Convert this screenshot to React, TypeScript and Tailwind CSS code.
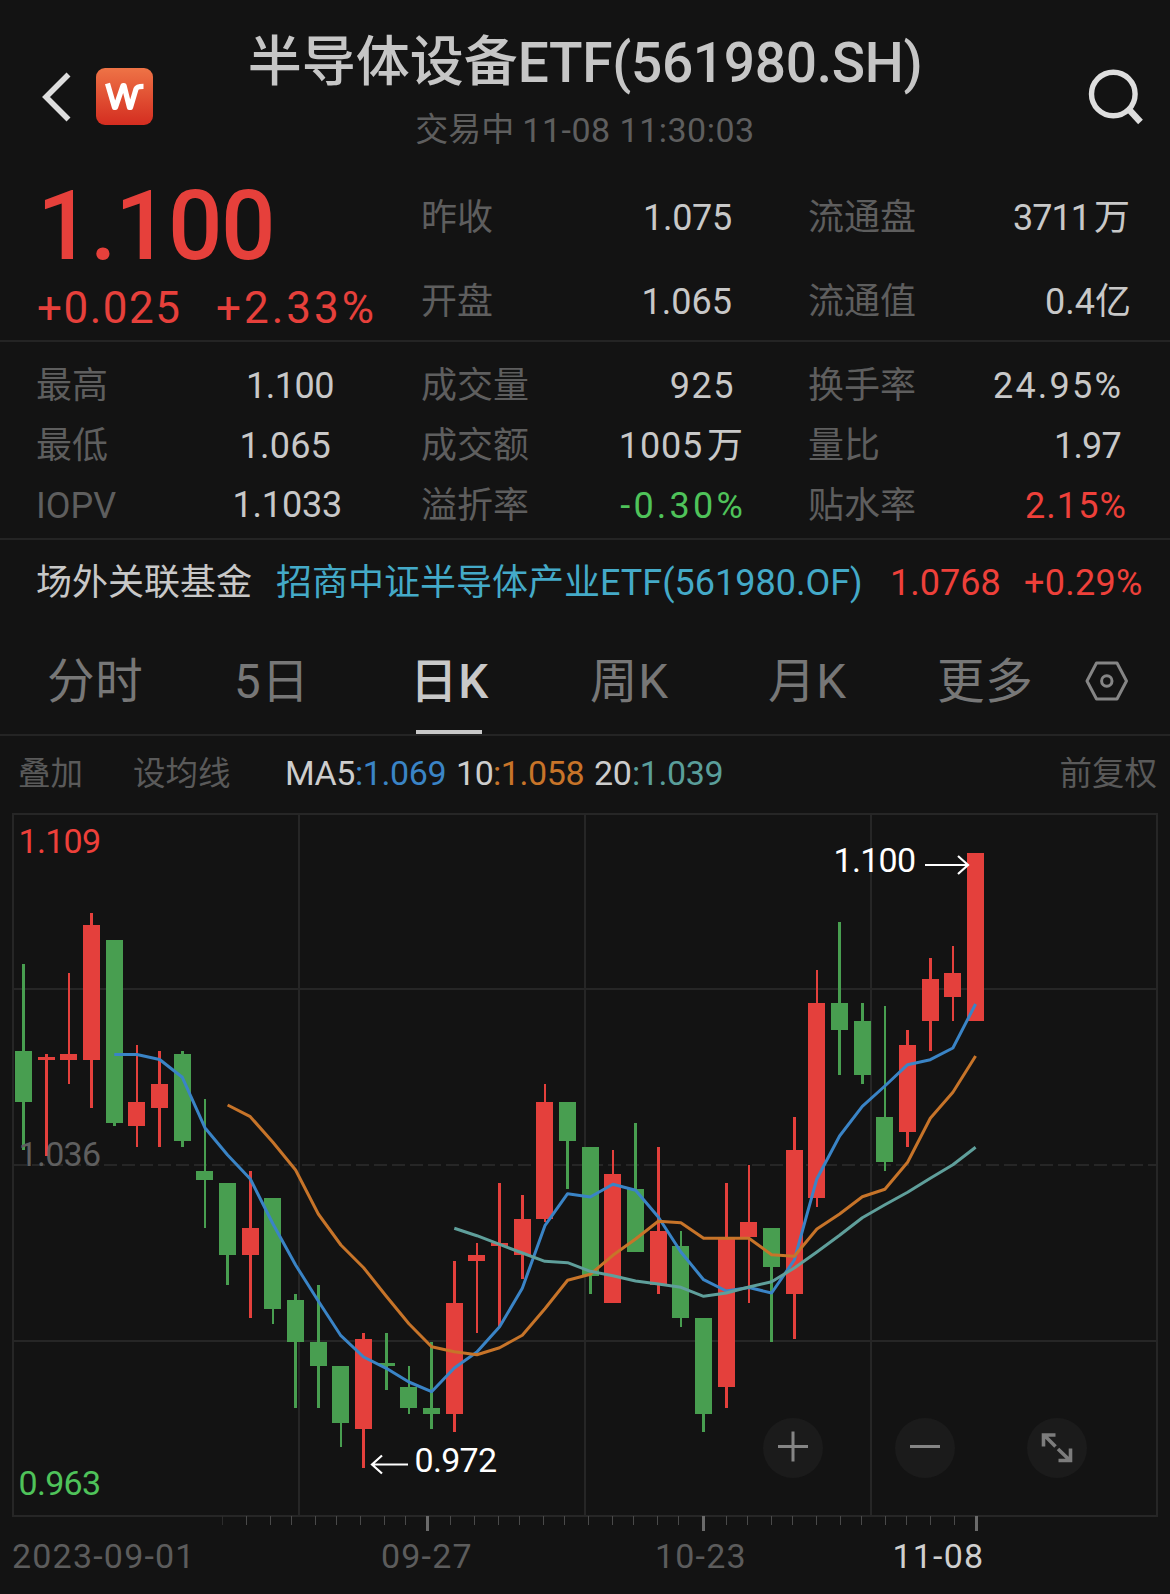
import clsx from "clsx";

type Stat = { label: string; value: string; unit?: string; className?: string };

// body and wick extents, in chart pixels
type Candle = { up: boolean; high: number; top: number; bottom: number; low: number };

const c = (dir: "u" | "d", high: number, top: number, bottom: number, low: number): Candle => ({
  up: dir === "u",
  high,
  top,
  bottom,
  low,
});

const CANDLES: Candle[] = [
  c("d", 964, 1051, 1102, 1150),
  c("u", 1054, 1057, 1060, 1156),
  c("u", 973, 1054, 1060, 1084),
  c("u", 913, 925, 1060, 1108),
  c("d", 940, 940, 1123, 1126),
  c("u", 1045, 1102, 1126, 1147),
  c("u", 1051, 1084, 1108, 1147),
  c("d", 1051, 1054, 1141, 1147),
  c("d", 1099, 1171, 1180, 1228),
  c("d", 1183, 1183, 1255, 1285),
  c("u", 1171, 1228, 1255, 1318),
  c("d", 1198, 1198, 1309, 1324),
  c("d", 1294, 1300, 1342, 1408),
  c("d", 1285, 1342, 1366, 1408),
  c("d", 1366, 1366, 1423, 1447),
  c("u", 1333, 1339, 1429, 1468),
  c("d", 1333, 1363, 1366, 1390),
  c("d", 1366, 1387, 1408, 1414),
  c("d", 1342, 1408, 1414, 1429),
  c("u", 1261, 1303, 1414, 1432),
  c("u", 1243, 1255, 1261, 1333),
  c("u", 1183, 1243, 1246, 1327),
  c("u", 1195, 1219, 1255, 1279),
  c("u", 1084, 1102, 1219, 1222),
  c("d", 1102, 1102, 1141, 1189),
  c("d", 1147, 1147, 1276, 1294),
  c("u", 1150, 1174, 1303, 1303),
  c("d", 1123, 1189, 1252, 1252),
  c("u", 1147, 1231, 1285, 1294),
  c("d", 1231, 1246, 1318, 1327),
  c("d", 1318, 1318, 1414, 1432),
  c("u", 1183, 1239, 1387, 1408),
  c("u", 1165, 1222, 1237, 1303),
  c("d", 1228, 1228, 1267, 1342),
  c("u", 1117, 1150, 1294, 1339),
  c("u", 970, 1003, 1198, 1207),
  c("d", 922, 1003, 1030, 1075),
  c("d", 1003, 1021, 1075, 1084),
  c("d", 1006, 1117, 1162, 1171),
  c("u", 1030, 1045, 1132, 1147),
  c("u", 958, 979, 1021, 1051),
  c("u", 946, 973, 997, 1021),
  c("u", 853, 853, 1021, 1021),
];

const MA5 = [
  1054.5, 1054.5, 1059.5, 1077.3, 1127.7, 1155, 1179, 1223.7, 1265, 1301, 1335.7, 1357, 1368.3,
  1382, 1391.7, 1368, 1352, 1326.7, 1288.3, 1225.7, 1193.7, 1197, 1184.3, 1190.3, 1217, 1252,
  1279.7, 1291, 1287.5, 1293, 1260, 1178.7, 1136, 1106.3, 1086, 1064.7, 1059.7, 1048, 1004,
];
const MA10 = [
  1105, 1116.7, 1142.3, 1170, 1214, 1245, 1267.7, 1296.3, 1323.7, 1346.7, 1351.7, 1354.7, 1347.7,
  1335.3, 1308.7, 1280.3, 1274.3, 1255.3, 1239, 1221.3, 1222.7, 1238.3, 1238.3, 1238.3, 1254.7,
  1256.3, 1229, 1214, 1196.7, 1189.3, 1162.3, 1118.3, 1092.3, 1056,
];
const MA20 = [
  1228.3, 1235.7, 1244.3, 1253, 1261.3, 1262.7, 1271.3, 1275.7, 1281, 1284, 1287.3, 1296.3, 1293,
  1287, 1281.7, 1268, 1252, 1235.3, 1217.7, 1204.7, 1192.3, 1178.3, 1164.7, 1147.3,
];

const TICKS = [
  246, 270, 291, 315, 336, 360, 384, 405, 450, 474, 498, 519, 543, 564, 588, 612, 633, 657, 678,
  726, 747, 771, 792, 816, 840, 861, 885, 906, 930, 954,
];
const MAJOR_TICKS = [427, 703, 976];

const cx = (i: number) => 23.6 + i * 22.667;

const linePoints = (values: number[], start: number) =>
  values.map((y, i) => `${cx(i + start).toFixed(1)},${y}`).join(" ");

const TOP_STATS: Stat[] = [
  { label: "昨收", value: "1.075", className: "pr-[76px] tracking-[-0.3px]" },
  { label: "流通盘", value: "3711", unit: "万", className: "pr-[40px] tracking-[-1px]" },
  { label: "开盘", value: "1.065", className: "pr-[76px]" },
  { label: "流通值", value: "0.4", unit: "亿", className: "pr-[39px]" },
];

const STATS: Stat[] = [
  { label: "最高", value: "1.100", className: "pr-[87px] tracking-[-0.5px]" },
  { label: "成交量", value: "925", className: "pr-[73px] tracking-[1.5px]" },
  { label: "换手率", value: "24.95%", className: "pr-[47px] tracking-[2.2px]" },
  { label: "最低", value: "1.065", className: "pr-[90px] tracking-[0.2px]" },
  { label: "成交额", value: "1005", unit: "万", className: "pr-[65px] tracking-[0.8px]" },
  { label: "量比", value: "1.97", className: "pr-[49px] tracking-[-0.8px]" },
  { label: "IOPV", value: "1.1033", className: "pr-[79px] pb-[2px] tracking-[-0.2px]" },
  { label: "溢折率", value: "-0.30%", className: "pr-[62px] tracking-[3.2px] text-[#4fc35a]" },
  { label: "贴水率", value: "2.15%", className: "pr-[43px] tracking-[1.1px] text-[#ee403a]" },
];

const TABS = [
  { label: "分时", className: "w-[187px]" },
  { label: "5日", className: "w-[176px]" },
  { label: "日K", className: "w-[180px]", active: true },
  { label: "周K", className: "w-[178px]" },
  { label: "月K", className: "w-[169px]" },
  { label: "更多", className: "w-[147px]" },
];

function StatCell({ label, value, unit, className }: Stat) {
  return (
    <div className="flex items-center justify-between whitespace-nowrap">
      <span className="pb-px text-[#5e5e5e]">{label}</span>
      <span className={clsx("flex", unit === "万" && "gap-1", className)}>
        {value}
        {unit && <span className="tracking-normal">{unit}</span>}
      </span>
    </div>
  );
}

function Header() {
  return (
    <header className="flex h-[170px] justify-between">
      <div className="flex w-[200px] items-start gap-6 pt-[68px] pl-[40px]">
        <svg className="h-[57px] w-8" viewBox="0 0 32 57" fill="none">
          <path d="M28.500 6.500 L6 29 L28.500 51.500" stroke="#dedede" strokeWidth="5.6" />
        </svg>
        <svg className="h-[57px] w-[57px]" viewBox="0 0 57 57" fill="none">
          <defs>
            <linearGradient id="logo" x1="0" y1="0" x2="0" y2="1">
              <stop offset="0" stopColor="#ee7346" />
              <stop offset="1" stopColor="#d42d20" />
            </linearGradient>
          </defs>
          <rect width="57" height="57" rx="9" fill="url(#logo)" />
          <path
            d="M11.500 15.500 L18.500 39.500 H19.500 L27 17.500 H28 L33.500 39.500 H34.500 L40 21 Q41 18.300 47.500 18.300"
            stroke="#fff"
            strokeWidth="5.2"
            strokeLinejoin="round"
          />
        </svg>
      </div>
      <div className="flex flex-col items-center whitespace-nowrap">
        <h1 className="mt-[30px] flex text-[54px] leading-[66px] font-medium text-[#c6c6c6]">
          半导体设备<span className="text-[55px] tracking-[-0.3px]">ETF(561980.SH)</span>
        </h1>
        <p className="mt-[1px] flex gap-2 text-[34px] leading-[66px] text-[#5e5e5e]">
          <span className="text-[33px]">交易中</span>
          <span className="tracking-[0.5px]">11-08 11:30:03</span>
        </p>
      </div>
      <div className="flex w-[200px] justify-end pt-[66px] pr-[24px]">
        <svg className="h-[60px] w-[60px]" viewBox="0 0 60 60" fill="none" stroke="#dedede">
          <circle cx="27.3" cy="28" r="21.8" strokeWidth="5.4" />
          <path d="M43 43.500 L54.500 56" strokeWidth="6.4" />
        </svg>
      </div>
    </header>
  );
}

function Quote() {
  return (
    <section className="flex h-[170px] text-[#c8c8c8]">
      <div className="w-[421px] whitespace-nowrap text-[#e6403b]">
        <div className="mt-[7px] pl-[37px] text-[96px] leading-[98px] font-medium tracking-[-1.6px]">
          1.100
        </div>
        <div className="flex pl-[37px] text-[44px] leading-[66px]">
          <span className="w-[179px] tracking-[1.5px]">+0.025</span>
          <span className="tracking-[3px]">+2.33%</span>
        </div>
      </div>
      <div className="mt-[6px] grid flex-1 auto-rows-[84px] grid-cols-[387px_362px] text-4xl">
        {TOP_STATS.map((stat) => (
          <StatCell key={stat.label} {...stat} />
        ))}
      </div>
    </section>
  );
}

function Stats() {
  return (
    <section className="grid h-[200px] auto-rows-[60px] grid-cols-[385px_387px_362px] border-y-2 border-[#242424] pt-[14px] pl-[36px] text-4xl text-[#c8c8c8]">
      {STATS.map((stat) => (
        <StatCell key={stat.label} {...stat} />
      ))}
    </section>
  );
}

function RelatedFund() {
  return (
    <section className="flex h-[84px] items-center pt-[2px] pl-[36px] text-4xl whitespace-nowrap">
      <span className="w-[240px] text-[#c8c8c8]">场外关联基金</span>
      <span className="w-[614px] text-[#44aac8]">招商中证半导体产业ETF(561980.OF)</span>
      <span className="w-[134px] text-[#ee403a]">1.0768</span>
      <span className="tracking-[0.3px] text-[#ee403a]">+0.29%</span>
    </section>
  );
}

function PeriodTabs() {
  return (
    <nav className="flex h-[112px] border-b-2 border-[#242424] pl-[47px] text-[47.5px] text-[#777]">
      {TABS.map((tab) => (
        <div key={tab.label} className={clsx("flex flex-col", tab.className)}>
          <span
            className={clsx(
              "pt-[11px] leading-[95px] tracking-[0.8px]",
              tab.active && "font-medium text-[#c8c8c8]",
            )}
          >
            {tab.label}
          </span>
          {tab.active && <span className="ml-[6px] h-1 w-[66px] bg-[#c8c8c8]" />}
        </div>
      ))}
      <svg className="mt-[34px] h-[46px] w-[46px]" viewBox="0 0 46 46" fill="none" stroke="#858585">
        <path d="M12.500 5 H33 L42.500 23 L33 41 H12.500 L3 23 Z" strokeWidth="3" strokeLinejoin="round" />
        <circle cx="22.800" cy="23" r="5.200" strokeWidth="3" />
      </svg>
    </nav>
  );
}

function MaBar() {
  return (
    <div className="flex h-[72px] items-center pl-[18px] text-[32.5px] whitespace-nowrap text-[#5a5a5a]">
      <span className="w-[115px] pt-[4px]">叠加</span>
      <span className="w-[152px] pt-[4px]">设均线</span>
      <div className="flex pt-[2px] text-[34px] tracking-[-0.4px] text-[#cdcdcd]">
        <span className="w-[70px]">MA5</span>
        <span className="w-[101px] text-[#3a84c6]">:1.069</span>
        <span className="w-[37px]">10</span>
        <span className="w-[101px] text-[#c77429]">:1.058</span>
        <span className="w-[38px]">20</span>
        <span className="text-[#5a9e9a]">:1.039</span>
      </div>
      <span className="ml-auto pt-[4px] pr-[13px]">前复权</span>
    </div>
  );
}

function CandleChart() {
  return (
    <svg className="block h-[786px] w-[1170px]" viewBox="0 808 1170 786" fill="none">
      <g stroke="#262626" strokeWidth="2" shapeRendering="crispEdges">
        <rect x="13" y="814" width="1144" height="702" />
        <path d="M299 814V1516M585 814V1516M871 814V1516M14 989H1157M14 1341H1157" />
        <path d="M14 1165H1157" strokeDasharray="13 5" />
      </g>

      <g stroke="#4a4a4a" shapeRendering="crispEdges">
        <path d="M222.500 1516V1525" stroke="#2c2c2c" />
        {TICKS.map((x) => (
          <path key={x} d={`M${x + 0.5} 1516V1525`} />
        ))}
        {MAJOR_TICKS.map((x) => (
          <path key={x} d={`M${x + 0.5} 1516V1531`} stroke="#6a6a6a" strokeWidth="3" />
        ))}
      </g>

      <g shapeRendering="crispEdges">
        {CANDLES.map(({ up, high, top, bottom, low }, i) => (
          <g key={i} fill={up ? "#e4403c" : "#489e50"}>
            <rect x={cx(i) - 1.35} y={high} width="2.7" height={low - high} />
            <rect x={Math.round(cx(i) - 8.5)} y={top} width="17" height={bottom - top} />
          </g>
        ))}
      </g>

      <g strokeWidth="3" strokeLinejoin="round">
        <polyline points={linePoints(MA5, 4)} stroke="#3a84c6" />
        <polyline points={linePoints(MA10, 9)} stroke="#c77429" />
        <polyline points={linePoints(MA20, 19)} stroke="#5f9f9b" />
      </g>

      <g stroke="#fff" strokeWidth="2.2">
        <path d="M925 865H968M958 856L968 865L958 874" />
        <path d="M408 1464.500H372M382 1455.500L372 1464.500L382 1473.500" />
      </g>

      <g fontSize="34" letterSpacing="-0.7">
        <text x="18.500" y="853" fill="#ee403a">1.109</text>
        <text x="18.500" y="1166" fill="#5f5f5f">1.036</text>
        <text x="18.500" y="1495" fill="#4fc35a">0.963</text>
        <text x="833.500" y="872" fill="#fff">1.100</text>
        <text x="414.500" y="1472" fill="#fff">0.972</text>
      </g>
      <g fontSize="34" fill="#5c5c5c" letterSpacing="1.2">
        <text x="12" y="1568">2023-09-01</text>
        <text x="381" y="1568">09-27</text>
        <text x="655" y="1568">10-23</text>
        <text x="892.500" y="1568" fill="#cfcfcf">11-08</text>
      </g>
    </svg>
  );
}

function ChartControls() {
  return (
    <div className="absolute bottom-[116px] left-[763px] flex gap-[72px]">
      {["M15 28.500H45M30 13.500V43.500", "M15 28.500H45"].map((d) => (
        <button key={d} className="h-[60px] w-[60px] rounded-full bg-[#1b1b1b]">
          <svg viewBox="0 0 60 60" fill="none" stroke="#858585" strokeWidth="3">
            <path d={d} />
          </svg>
        </button>
      ))}
      <button className="h-[60px] w-[60px] rounded-full bg-[#1b1b1b]">
        <svg viewBox="0 0 60 60" fill="none" stroke="#7c7c7c" strokeWidth="3.6">
          <path d="M16.500 28.500V17H28.500M17 17L28.500 28.500M43.500 30.500V42.500H31.500M43 42.500L31 31" />
        </svg>
      </button>
    </div>
  );
}

export default function App() {
  return (
    <main className="h-[1594px] w-[1170px] overflow-hidden bg-[#131313] font-[Roboto,'Noto_Sans_CJK_SC',sans-serif]">
      <Header />
      <Quote />
      <Stats />
      <RelatedFund />
      <PeriodTabs />
      <MaBar />
      <div className="relative">
        <CandleChart />
        <ChartControls />
      </div>
    </main>
  );
}
